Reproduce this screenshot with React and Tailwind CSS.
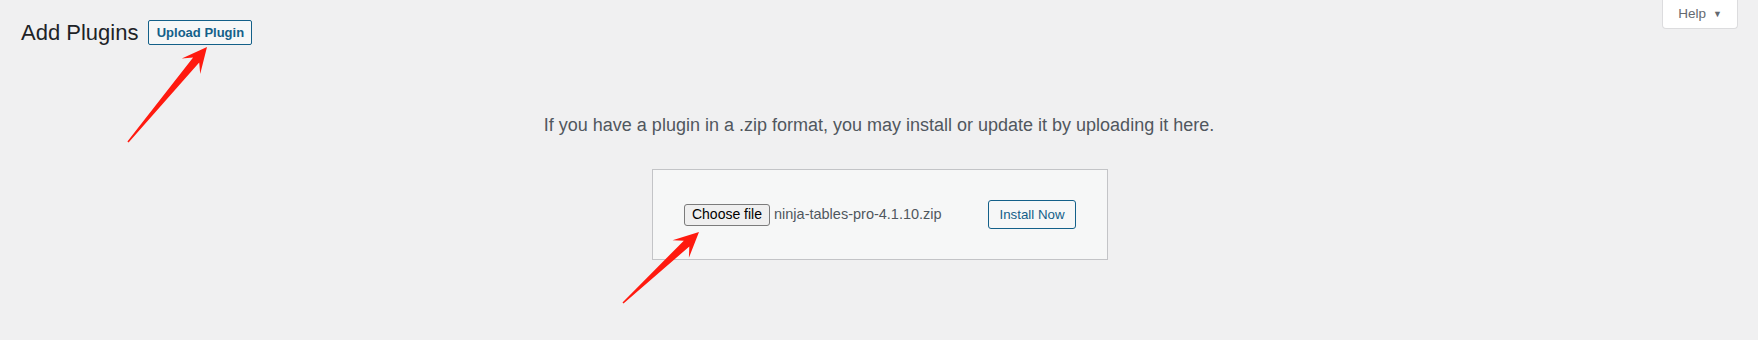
import React from "react";

function arrowPoints(tail, tip) {
  const [tx, ty] = tail;
  const [px, py] = tip;
  const len = Math.hypot(px - tx, py - ty);
  const dx = (px - tx) / len;
  const dy = (py - ty) / len;
  const nx = -dy;
  const ny = dx;
  const L = 25;
  const W = 12;
  const J = 17;
  const w = 4;
  const pts = [
    [tx + nx * 0.8, ty + ny * 0.8],
    [px - dx * J + nx * w, py - dy * J + ny * w],
    [px - dx * L + nx * W, py - dy * L + ny * W],
    [px, py],
    [px - dx * L - nx * W, py - dy * L - ny * W],
    [px - dx * J - nx * w, py - dy * J - ny * w],
    [tx - nx * 0.8, ty - ny * 0.8],
  ];
  return pts.map((p) => p.map((v) => v.toFixed(1)).join(",")).join(" ");
}

export default function App() {
  return (
    <div className="relative h-[340px] w-full overflow-hidden bg-[#f0f0f1] font-['Liberation_Sans',Arial,sans-serif]">
      <div className="flex items-start justify-between">
        <div className="flex items-center gap-[10px] pl-[21px] pt-[20px]">
          <h1 className="text-[22px] leading-[25px] font-normal text-[#1d2327]">Add Plugins</h1>
          <button className="h-[25px] w-[104px] rounded-[2px] border border-[#136089] bg-[#f6f7f7] text-[13px] font-bold text-[#136089]">
            Upload Plugin
          </button>
        </div>
        <button className="mr-[20px] flex h-[29px] w-[76px] items-center justify-center gap-[7px] rounded-b-[4px] border border-t-0 border-[#dcdcde] bg-white text-[13.5px] text-[#646970]">
          <span>Help</span>
          <span className="text-[9px] leading-none">▼</span>
        </button>
      </div>
      <p className="mt-[67px] text-center text-[18px] leading-[27px] text-[#50575e]">
        If you have a plugin in a .zip format, you may install or update it by uploading it here.
      </p>
      <div className="mx-auto mt-[30px] flex h-[91px] w-[456px] translate-x-[1px] items-center justify-between border border-[#c3c4c7] bg-[#f6f7f7] px-[31px]">
        <div className="flex items-center">
          <span className="flex h-[22px] w-[86px] items-center justify-center rounded-[3px] border border-[#7b7b7b] bg-[#efefef] text-[14px] text-black">
            Choose file
          </span>
          <span className="ml-[4px] text-[14.5px] text-[#50575e]">ninja-tables-pro-4.1.10.zip</span>
        </div>
        <button className="h-[29px] w-[88px] rounded-[3px] border border-[#136089] bg-[#f6f7f7] text-[13.3px] text-[#136089]">
          Install Now
        </button>
      </div>
      <svg className="pointer-events-none absolute left-0 top-0" width="1758" height="340" viewBox="0 0 1758 340">
        <polygon points={arrowPoints([128, 142], [207, 47])} fill="#ff1a0f" />
        <polygon points={arrowPoints([623, 303], [699, 232])} fill="#ff1a0f" />
      </svg>
    </div>
  );
}
